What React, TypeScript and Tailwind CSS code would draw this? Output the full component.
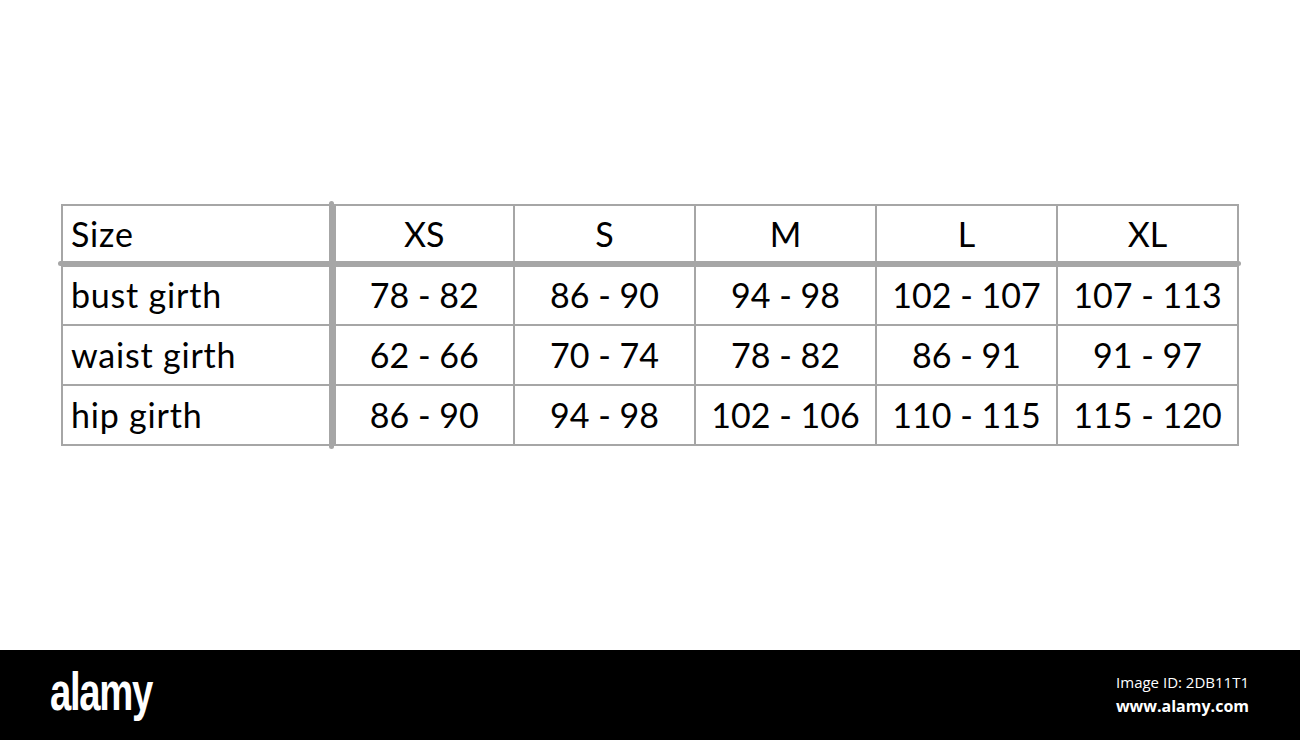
import React from 'react';

const sizes = ['XS', 'S', 'M', 'L', 'XL'];

const rows: { label: string; values: string[] }[] = [
  { label: 'bust girth', values: ['78 - 82', '86 - 90', '94 - 98', '102 - 107', '107 - 113'] },
  { label: 'waist girth', values: ['62 - 66', '70 - 74', '78 - 82', '86 - 91', '91 - 97'] },
  { label: 'hip girth', values: ['86 - 90', '94 - 98', '102 - 106', '110 - 115', '115 - 120'] },
];

const cell = 'border-2 border-[#a6a6a6] text-center align-middle p-0';

export default function App() {
  return (
    <div className="w-[1300px] h-[740px] flex flex-col bg-white overflow-hidden">
      {/* Size chart */}
      <div className="h-[650px] pt-[204px] pl-[61px]">
        <div className="relative w-[1177px]">
          <table
            className="table-fixed border-collapse w-[1177px] text-black text-[34px] leading-none"
            style={{ fontFamily: 'Lato, "Open Sans", sans-serif' }}
          >
            <colgroup>
              <col className="w-[271px]" />
              {sizes.map((s) => (
                <col key={s} className="w-[181px]" />
              ))}
            </colgroup>
            <thead>
              <tr className="h-[59px]">
                <th className={`${cell} border-r-[5px] border-b-[5px] text-left font-normal pl-[8px] tracking-[0.8px]`}>
                  Size
                </th>
                {sizes.map((s) => (
                  <th key={s} className={`${cell} border-b-[5px] font-normal`}>
                    {s}
                  </th>
                ))}
              </tr>
            </thead>
            <tbody>
              {rows.map((r, i) => (
                <tr key={r.label} className={i === 0 ? 'h-[61px]' : 'h-[60px]'}>
                  <td className={`${cell} border-r-[5px] text-left pl-[8px] tracking-[0.8px]`}>{r.label}</td>
                  {r.values.map((v, j) => (
                    <td key={j} className={cell}>
                      {v}
                    </td>
                  ))}
                </tr>
              ))}
            </tbody>
          </table>
          {/* rounded overshoot of the heavy rules */}
          <span className="absolute left-[-3px] right-[-3px] top-[57px] h-[5px] rounded-full bg-[#a6a6a6]" />
          <span className="absolute left-[268px] top-[-3px] bottom-[-3px] w-[5px] rounded-full bg-[#a6a6a6]" />
        </div>
      </div>

      {/* Footer strip */}
      <div className="h-[90px] bg-black flex items-center justify-between pl-[50px] pr-[51px]">
        <div
          className="text-white font-bold text-[58px] leading-none tracking-[-2px] scale-x-[0.66] scale-y-[0.92] origin-left -mt-[6px]"
          style={{ fontFamily: '"Liberation Sans", Arial, sans-serif' }}
        >
          alamy
        </div>
        <div
          className="flex flex-col items-end text-white leading-none gap-[8px] -mt-[2px]"
          style={{ fontFamily: '"Open Sans", "Noto Sans", sans-serif' }}
        >
          <span className="text-[15px]">Image ID: 2DB11T1</span>
          <span className="text-[16px] font-bold">www.alamy.com</span>
        </div>
      </div>
    </div>
  );
}
